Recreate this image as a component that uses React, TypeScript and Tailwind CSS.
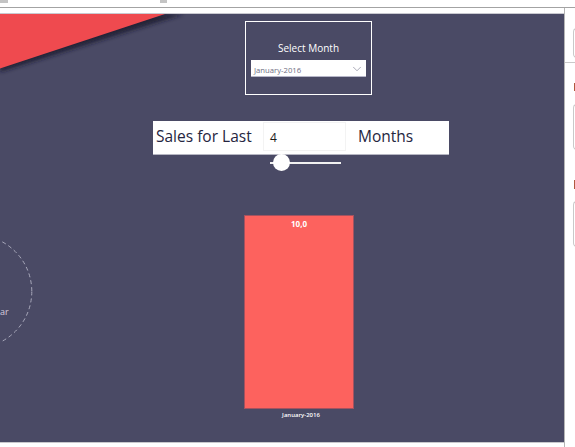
import { ChevronDown } from "lucide-react";

const font = { fontFamily: '"Open Sans", "Noto Sans", sans-serif' };

function Corner() {
  return (
    <svg className="absolute left-0 top-0" width="200" height="75" viewBox="0 0 200 75">
      <defs>
        <filter id="soft" x="-20%" y="-20%" width="140%" height="140%">
          <feGaussianBlur stdDeviation="2" />
        </filter>
      </defs>
      <polygon points="0,0 184,0 0,58" fill="#15152c" fillOpacity="0.8" filter="url(#soft)" />
      <polygon points="0,0 165,0 0,54.5" fill="#ef4a4f" />
    </svg>
  );
}

function DashedCircle() {
  return (
    <>
      <svg className="absolute left-0 top-[224px]" width="36" height="110" viewBox="0 0 36 110">
        <circle cx="-24.7" cy="53.5" r="56.5" fill="none" stroke="#a9a9bb" strokeWidth="1" strokeDasharray="4 3" />
      </svg>
      <span className="absolute left-0 top-[292px] text-[9px] leading-[12px] text-[#d5cbdc]">ar</span>
    </>
  );
}

export default function App() {
  return (
    <div className="w-[575px] h-[447px] overflow-hidden bg-white flex flex-col" style={font}>
      {/* top ribbon edge */}
      <div className="h-[8px] shrink-0">
        <div className="flex gap-[152px] h-[3px]">
          <div className="w-[8px] bg-[#c4c4c4]" />
          <div className="w-[7px] bg-[#c4c4c4]" />
        </div>
        <div className="mt-[4px] h-px bg-[#a3a3a3]" />
      </div>

      <div className="flex flex-1 min-h-0">
        <div className="w-[564px] shrink-0 pt-[5px]">
          {/* report canvas */}
          <div className="relative h-[429px] bg-[#4a4a65] overflow-hidden border-t border-[#c9c9d0]">
            <Corner />
            <DashedCircle />

            <div className="ml-[245px] mt-[7px] w-[127px] h-[74px] border border-white flex flex-col items-center">
              <div className="mt-[20px] text-[10px] leading-[13px] text-white">Select Month</div>
              <div className="mt-[5px] w-[115px] h-[17px] bg-white border-b border-[#b6b6c8] flex items-center justify-between pt-px pl-[3px] pr-[2px]">
                <span className="pt-[3px] text-[7.7px] leading-[10px] text-[#6f6f85]">January-2016</span>
                <ChevronDown size={14} strokeWidth={1} className="text-[#6f6f85]" />
              </div>
            </div>

            <div className="ml-[153px] mt-[26px] w-[296px] h-[34px] bg-white flex items-start border-b border-[#b6b6c2]">
              <span className="ml-[3px] w-[107px] text-[15.5px] leading-[30px] text-[#252540]">Sales for Last</span>
              <div className="mt-px w-[83px] h-[29px] border border-[#f3f3f3] pl-[6px] text-[12px] leading-[29px] text-[#1a1a1a]">4</div>
              <span className="ml-[12px] text-[15.5px] leading-[30px] text-[#252540]">Months</span>
            </div>

            <div className="ml-[270px] w-[71px] h-[15px] flex items-center relative">
              <div className="w-full h-[2px] bg-[#f1f1f1]" />
              <div className="absolute left-[3px] w-[17px] h-[17px] rounded-full bg-white" />
            </div>

            <div className="ml-[244px] mt-[45px] w-[110px] h-[194px] bg-[#fd625e] border border-[#a4525f] text-center text-[8px] leading-[11px] font-bold text-white pt-[2px]">
              10,0
            </div>
            <div className="ml-[244px] w-[114px] mt-[2px] text-center text-[6px] leading-[9px] font-semibold text-white">January-2016</div>
          </div>
          <div className="h-px bg-[#c8c8cc]" />
        </div>

        {/* filters pane edge */}
        <div className="flex-1 border-l border-[#b5b5b5] bg-white">
          <div className="h-[55px] border-b border-[#c9c9c9] pt-[20px] pl-[8px]">
            <div className="w-4 h-[30px] rounded-l border border-r-0 border-[#c9c9c9]" />
          </div>
          <div className="pl-[8px]">
            <div className="mt-[20px] ml-px w-[2px] h-[8px] bg-[#b0593f]" />
            <div className="mt-[13px] w-4 h-[46px] rounded-l border border-r-0 border-[#c9c9c9]" />
            <div className="mt-[30px] ml-px w-[2px] h-[9px] bg-[#b0593f]" />
            <div className="mt-[12px] w-4 h-[46px] rounded-l border border-r-0 border-[#c9c9c9]" />
          </div>
        </div>
      </div>
    </div>
  );
}
